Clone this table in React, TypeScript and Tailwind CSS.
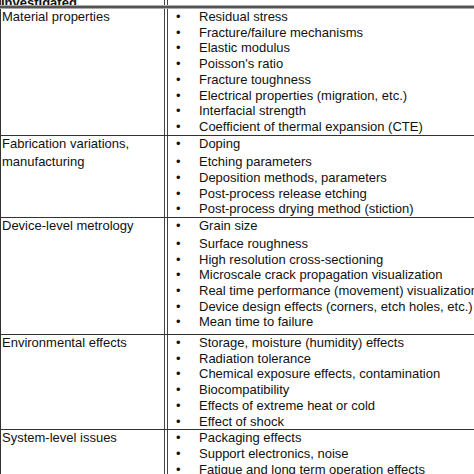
type Row = { label: string[]; items: string[]; firstGap?: string; padBottom?: string };

const rows: Row[] = [
  {
    label: ['Material properties'],
    items: [
      'Residual stress',
      'Fracture/failure mechanisms',
      'Elastic modulus',
      "Poisson's ratio",
      'Fracture toughness',
      'Electrical properties (migration, etc.)',
      'Interfacial strength',
      'Coefficient of thermal expansion (CTE)',
    ],
  },
  {
    label: ['Fabrication variations,', 'manufacturing'],
    items: [
      'Doping',
      'Etching parameters',
      'Deposition methods, parameters',
      'Post-process release etching',
      'Post-process drying method (stiction)',
    ],
    firstGap: 'mb-[3px]',
  },
  {
    label: ['Device-level metrology'],
    items: [
      'Grain size',
      'Surface roughness',
      'High resolution cross-sectioning',
      'Microscale crack propagation visualization',
      'Real time performance (movement) visualization',
      'Device design effects (corners, etch holes, etc.)',
      'Mean time to failure',
    ],
    firstGap: 'mb-[2px]',
    padBottom: 'pb-[4px]',
  },
  {
    label: ['Environmental effects'],
    items: [
      'Storage, moisture (humidity) effects',
      'Radiation tolerance',
      'Chemical exposure effects, contamination',
      'Biocompatibility',
      'Effects of extreme heat or cold',
      'Effect of shock',
    ],
  },
  {
    label: ['System-level issues'],
    items: [
      'Packaging effects',
      'Support electronics, noise',
      'Fatigue and long term operation effects',
    ],
  },
];

export default function App() {
  return (
    <div
      className="w-[474px] h-[474px] overflow-hidden bg-white text-[13px] leading-[15.7px] text-[#111]"
      style={{ fontFamily: '"Liberation Sans", Arial, sans-serif' }}
    >
      {/* header row, cut by the top edge */}
      <div className="flex h-[5px] overflow-hidden border-l border-[#333]">
        <div className="w-[163px] relative">
          <span className="absolute left-0 bottom-[-6px] font-bold">Investigated</span>
        </div>
        <div className="w-[4px] border-x border-[#444]" />
        <div className="flex-1" />
      </div>
      <div className="h-[4px] border-y border-[#aaa] bg-[#555]" />

      {rows.map((row, i) => (
        <div key={i} className={`flex border-l border-[#333] ${i > 0 ? 'border-t border-[#222]' : ''}`}>
          <div className="w-[163px] shrink-0 pl-[1px]">
            {row.label.map((l, j) => (
              <div key={l} className={`whitespace-nowrap ${j === 0 && row.firstGap ? row.firstGap : ''}`}>{l}</div>
            ))}
          </div>
          <div className="w-[4px] shrink-0 border-x border-[#444]" />
          <ul className={`flex-1 min-w-0 ${row.padBottom ?? ''}`}>
            {row.items.map((item, j) => (
              <li key={item} className={`flex whitespace-nowrap ${j === 0 && row.firstGap ? row.firstGap : ''}`}>
                <span className="w-[31px] shrink-0 pl-[8px]">•</span>
                <span>{item}</span>
              </li>
            ))}
          </ul>
        </div>
      ))}
    </div>
  );
}
